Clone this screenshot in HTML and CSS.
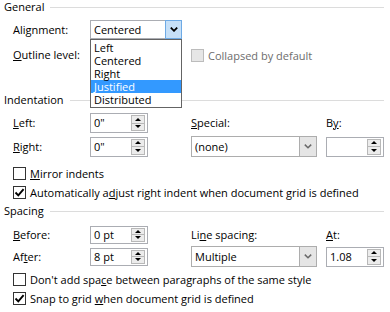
FILE: index.html
```html
<!DOCTYPE html>
<html>
<head>
<meta charset="utf-8">
<link rel="stylesheet" href="styles.css">
</head>
<body>
<div class="page">
  <section class="group general">
    <div class="group-head">General</div>
    <div class="grid grid-general">
      <span class="label">Ali<u>g</u>nment:</span>
      <div class="select select-active"><span class="value">Centered</span><span class="drop drop-active"><svg width="8" height="5" viewBox="0 0 8 5"><path d="M0.8 0.6 L4 3.8 L7.2 0.6" fill="none" stroke="#000" stroke-width="1.8"/></svg></span></div>
      <span></span>
      <span class="label"><u>O</u>utline level:</span>
      <div class="select"><span class="value"></span></div>
      <label class="check disabled"><span class="box"></span><span class="text">Collapsed by default</span></label>
    </div>
    <ul class="listbox">
      <li>Left</li>
      <li>Centered</li>
      <li>Right</li>
      <li class="selected">Justified</li>
      <li>Distributed</li>
    </ul>
  </section>

  <section class="group indentation">
    <div class="group-head">Indentation</div>
    <div class="grid grid-fields">
      <span class="label"><u>L</u>eft:</span>
      <div class="spin"><span class="value">0"</span><span class="spin-btns"><span class="up"></span><span class="down"></span></span></div>
      <span class="label col3"><u>S</u>pecial:</span>
      <span class="label">B<u>y</u>:</span>
      <span class="label"><u>R</u>ight:</span>
      <div class="spin"><span class="value">0"</span><span class="spin-btns"><span class="up"></span><span class="down"></span></span></div>
      <div class="select select-wide col3"><span class="value">(none)</span><span class="drop"><svg width="8" height="5" viewBox="0 0 8 5"><path d="M0.8 0.6 L4 3.8 L7.2 0.6" fill="none" stroke="#6a6a6a" stroke-width="1.5"/></svg></span></div>
      <div class="spin spin-tall"><span class="value"></span><span class="spin-btns"><span class="up"></span><span class="down"></span></span></div>
    </div>
    <div class="checks">
      <label class="check"><span class="box"></span><span class="text"><u>M</u>irror indents</span></label>
      <label class="check"><span class="box checked"><svg width="11" height="11" viewBox="0 0 11 11"><path d="M1.5 5.5 L4.3 8.3 L9.6 2.2" fill="none" stroke="#000" stroke-width="1.9"/></svg></span><span class="text">Automatically a<u>d</u>just right indent when document grid is defined</span></label>
    </div>
  </section>

  <section class="group spacing">
    <div class="group-head">Spacing</div>
    <div class="grid grid-fields grid-spacing">
      <span class="label"><u>B</u>efore:</span>
      <div class="spin spin-short"><span class="value">0 pt</span><span class="spin-btns"><span class="up"></span><span class="down"></span></span></div>
      <span class="label col3">Li<u>n</u>e spacing:</span>
      <span class="label"><u>A</u>t:</span>
      <span class="label">Af<u>t</u>er:</span>
      <div class="spin spin-short"><span class="value">8 pt</span><span class="spin-btns"><span class="up"></span><span class="down"></span></span></div>
      <div class="select select-wide col3"><span class="value">Multiple</span><span class="drop"><svg width="8" height="5" viewBox="0 0 8 5"><path d="M0.8 0.6 L4 3.8 L7.2 0.6" fill="none" stroke="#6a6a6a" stroke-width="1.5"/></svg></span></div>
      <div class="spin spin-tall"><span class="value">1.08</span><span class="spin-btns"><span class="up"></span><span class="down"></span></span></div>
    </div>
    <div class="checks checks-spacing">
      <label class="check"><span class="box"></span><span class="text">Don't add spa<u>c</u>e between paragraphs of the same style</span></label>
      <label class="check"><span class="box checked"><svg width="11" height="11" viewBox="0 0 11 11"><path d="M1.5 5.5 L4.3 8.3 L9.6 2.2" fill="none" stroke="#000" stroke-width="1.9"/></svg></span><span class="text">Snap to grid <u>w</u>hen document grid is defined</span></label>
    </div>
  </section>
</div>
</body>
</html>
```

FILE: styles.css
```css
* { box-sizing: border-box; }

html, body {
  margin: 0;
  padding: 0;
  background: #fff;
}

body {
  width: 390px;
  height: 312px;
  overflow: hidden;
  font-family: "Open Sans", "Noto Sans", "Liberation Sans", sans-serif;
  font-size: 11px;
  color: #000;
}

u { text-decoration: underline; text-underline-offset: 1px; }

.page {
  padding: 0 6px 0 4px;
}

.group { position: relative; }

.group-head {
  display: flex;
  align-items: center;
  gap: 6px;
  height: 14px;
  line-height: 14px;
  color: #000;
}

.group-head::after {
  content: "";
  flex: 1;
  border-top: 1px solid #dcdcdc;
  margin-top: 0;
}

.indentation { margin-top: 28px; }
.spacing { margin-top: 2px; }

.grid {
  display: grid;
  align-items: center;
  margin-left: 9px;
}

.grid-general {
  grid-template-columns: 77px 92px 1fr;
  grid-template-rows: 19px 20px;
  row-gap: 6px;
  margin-top: 6px;
}

.grid-fields {
  grid-template-columns: 77px 58px 43px 126px 9px 58px;
  grid-template-rows: 20px 21px;
  row-gap: 3px;
  margin-top: 6px;
}

.grid-spacing {
  grid-template-rows: 19px 21px;
  row-gap: 2px;
  margin-top: 7px;
}

.col3 { grid-column: 4; }
.grid-fields > :nth-child(4) { grid-column: 6; }
.grid-fields > :nth-child(5) { grid-column: 1; }
.grid-fields > :nth-child(8) { grid-column: 6; }

.label { white-space: nowrap; line-height: 14px; }

.value {
  flex: 1;
  padding-left: 3px;
  white-space: nowrap;
  overflow: hidden;
}

.select {
  display: flex;
  align-items: stretch;
  height: 19px;
  border: 1px solid #abadb3;
  background: #fff;
  line-height: 17px;
}

.select-wide {
  height: 21px;
  line-height: 19px;
  border-color: #adadad;
}

.drop {
  width: 17px;
  display: flex;
  align-items: center;
  justify-content: center;
  background: #e5e5e5;
  border-left: 1px solid #adadad;
}

.drop-active {
  background: #c6e0f8;
  border: 1px solid #6eaae5;
  margin: -1px -1px -1px 0;
  width: 17px;
}

.listbox {
  position: absolute;
  z-index: 10;
  left: 86px;
  top: 39px;
  width: 92px;
  margin: 0;
  padding: 1px 0 1px;
  list-style: none;
  background: #fff;
  border: 1px solid #646464;
}

.listbox li {
  height: 13px;
  line-height: 13px;
  padding-left: 3px;
}

.listbox li.selected {
  background: #3399ff;
  color: #fff;
}

.spin {
  display: flex;
  align-items: stretch;
  height: 20px;
  border: 1px solid #abadb3;
  background: #fff;
  line-height: 18px;
}

.spin-short { height: 18px; line-height: 16px; }
.spin-tall { height: 20px; }

.spin-btns {
  width: 14px;
  margin: 1px 2px 1px 0;
  display: flex;
  flex-direction: column;
  border: 1px solid #b8b8b8;
  background: #ececec;
}

.spin-btns .up,
.spin-btns .down {
  flex: 1;
  display: flex;
  align-items: center;
  justify-content: center;
}

.spin-btns .up { border-bottom: 1px solid #b8b8b8; }

.spin-btns .up::before {
  content: "";
  border-left: 3px solid transparent;
  border-right: 3px solid transparent;
  border-bottom: 3px solid #000;
}

.spin-btns .down::before {
  content: "";
  border-left: 3px solid transparent;
  border-right: 3px solid transparent;
  border-top: 3px solid #000;
}

.checks {
  margin-left: 9px;
  margin-top: 7px;
}

.checks-spacing { margin-top: 3px; }

.check {
  display: flex;
  align-items: center;
  height: 19px;
  white-space: nowrap;
}

.check .text { white-space: pre; }

.check .box {
  width: 13px;
  height: 13px;
  border: 1px solid #333;
  background: #fff;
  margin-right: 4px;
  flex: none;
  display: flex;
  align-items: center;
  justify-content: center;
}

.grid-general .check { margin-left: 9px; }

.check.disabled { color: #6d6d6d; }
.check.disabled .box {
  background: #e6e6e6;
  border-color: #bcbcbc;
}
```
